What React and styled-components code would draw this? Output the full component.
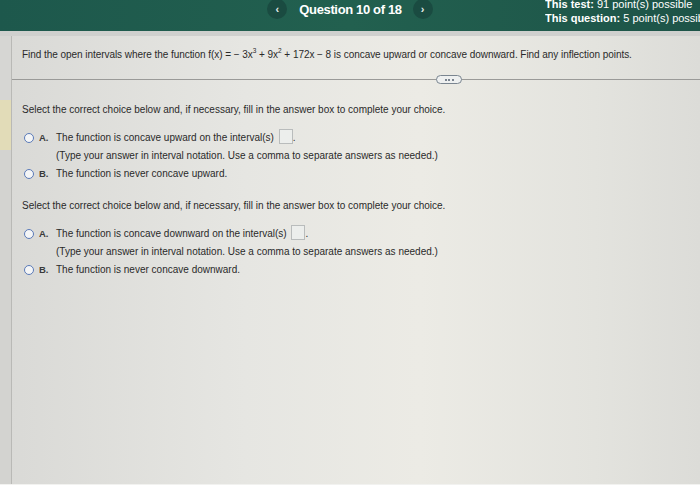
import styled, { createGlobalStyle } from "styled-components";

const Global = createGlobalStyle`
    html, body {
        margin: 0;
        padding: 0;
        width: 700px;
        height: 485px;
        overflow: hidden;
        font-family: "Liberation Sans", Arial, sans-serif;
    }
`

const Page = styled.div`
    width: 700px;
    height: 485px;
    display: flex;
    flex-direction: column;
    background: linear-gradient(90deg, #d9d9d6 0%, #e6e6e2 35%, #ecebe5 60%, #e3e3de 85%, #dcdcd8 100%);
`

const Header = styled.div`
    height: 31px;
    flex-shrink: 0;
    background: linear-gradient(90deg, #1d584c 0%, #22604f 50%, #1d5448 100%);
    display: grid;
    grid-template-columns: 1fr auto 1fr;
    align-items: start;
    color: white;
`

const Nav = styled.div`
    grid-column: 2;
    display: flex;
    align-items: center;
    margin-top: -1px;
`

const NavButton = styled.div`
    width: 20px;
    height: 20px;
    border-radius: 50%;
    background: #1a4b41;
    display: flex;
    align-items: center;
    justify-content: center;
    font-size: 11px;
    font-weight: bold;
    color: #e8eeec;
`

const QuestionTitle = styled.div`
    font-size: 13px;
    font-weight: bold;
    letter-spacing: -0.35px;
    padding: 0 11px 0 12px;
`

const Points = styled.div`
    grid-column: 3;
    justify-self: end;
    font-size: 11px;
    line-height: 14px;
    white-space: nowrap;
    margin-top: -3px;
    width: 155px;
    overflow: hidden;
    b {
        font-weight: bold;
    }
`

const Strip = styled.div`
    height: 5px;
    flex-shrink: 0;
    background: #cfd0ce;
`

const Body = styled.div`
    flex: 1;
    display: flex;
    border-bottom: 1px solid #f2f2f0;
`

const Sidebar = styled.div`
    width: 11px;
    flex-shrink: 0;
    border-right: 1px solid #b9b9b6;
    background: linear-gradient(180deg, #d6d6d3 0px, #d6d6d3 64px, #e2dcb8 64px, #e2dcb8 114px, #d3d3d0 114px);
`

const Content = styled.div`
    flex: 1;
    display: flex;
    flex-direction: column;
`

const Question = styled.div`
    padding: 13px 0 0 10px;
    height: 24px;
    font-size: 10px;
    line-height: 12px;
    letter-spacing: -0.05px;
    color: #2a2a2a;
    sup {
        font-size: 6.5px;
        vertical-align: 5px;
        line-height: 0;
    }
`

const Divider = styled.div`
    position: relative;
    height: 1px;
    margin-top: 6px;
    background: #9a9a98;
`

const MorePill = styled.div`
    position: absolute;
    left: 424px;
    top: -4px;
    width: 24px;
    height: 7px;
    border: 1px solid #7a8590;
    border-radius: 5px;
    background: #eef0f0;
    display: flex;
    align-items: center;
    justify-content: center;
    gap: 1.5px;
    span {
        width: 2px;
        height: 2px;
        border-radius: 50%;
        background: #556070;
    }
`

const Part = styled.div`
    padding: ${p => p.$top}px 0 0 10px;
    display: flex;
    flex-direction: column;
`

const Instruction = styled.div`
    font-size: 10px;
    line-height: 12px;
    color: #2a2a2a;
    margin-bottom: ${p => p.$gap}px;
`

const Option = styled.div`
    display: flex;
    align-items: flex-start;
    margin-left: 2px;
`

const Radio = styled.div`
    width: 8px;
    height: 8px;
    border-radius: 50%;
    border: 1.3px solid #5a7ab8;
    background: #f4f5f6;
    margin-top: 4px;
    flex-shrink: 0;
`

const Letter = styled.div`
    width: 17px;
    margin-left: 5px;
    font-size: 9.5px;
    line-height: 18px;
    font-weight: bold;
    color: #3a3a3a;
`

const OptionText = styled.div`
    font-size: 10px;
    color: #2a2a2a;
    line-height: 18px;
`

const AnswerBox = styled.span`
    display: inline-block;
    width: 12px;
    height: 13px;
    border: 1px solid #b9bcbc;
    background: #eceeec;
    vertical-align: -3px;
    margin-left: 2px;
`

function ChoiceBlock({ direction, top, gap }) {
    return (
        <Part $top={top}>
            <Instruction $gap={gap}>Select the correct choice below and, if necessary, fill in the answer box to complete your choice.</Instruction>
            <Option>
                <Radio />
                <Letter>A.</Letter>
                <OptionText>
                    The function is concave {direction} on the interval(s) <AnswerBox />.
                    <br />
                    (Type your answer in interval notation. Use a comma to separate answers as needed.)
                </OptionText>
            </Option>
            <Option>
                <Radio />
                <Letter>B.</Letter>
                <OptionText>The function is never concave {direction}.</OptionText>
            </Option>
        </Part>
    )
}

export default function App() {
    return (
        <>
            <Global />
            <Page>
                <Header>
                    <Nav>
                        <NavButton>‹</NavButton>
                        <QuestionTitle>Question 10 of 18</QuestionTitle>
                        <NavButton>›</NavButton>
                    </Nav>
                    <Points>
                        <div><b>This test:</b> 91 point(s) possible</div>
                        <div><b>This question:</b> 5 point(s) possible</div>
                    </Points>
                </Header>
                <Strip />
                <Body>
                    <Sidebar />
                    <Content>
                        <Question>
                            Find the open intervals where the function f(x) = − 3x<sup>3</sup> + 9x<sup>2</sup> + 172x − 8 is concave upward or concave downward. Find any inflection points.
                        </Question>
                        <Divider>
                            <MorePill><span /><span /><span /></MorePill>
                        </Divider>
                        <ChoiceBlock direction="upward" top={24} gap={13} />
                        <ChoiceBlock direction="downward" top={17} gap={13} />
                    </Content>
                </Body>
            </Page>
        </>
    )
}
